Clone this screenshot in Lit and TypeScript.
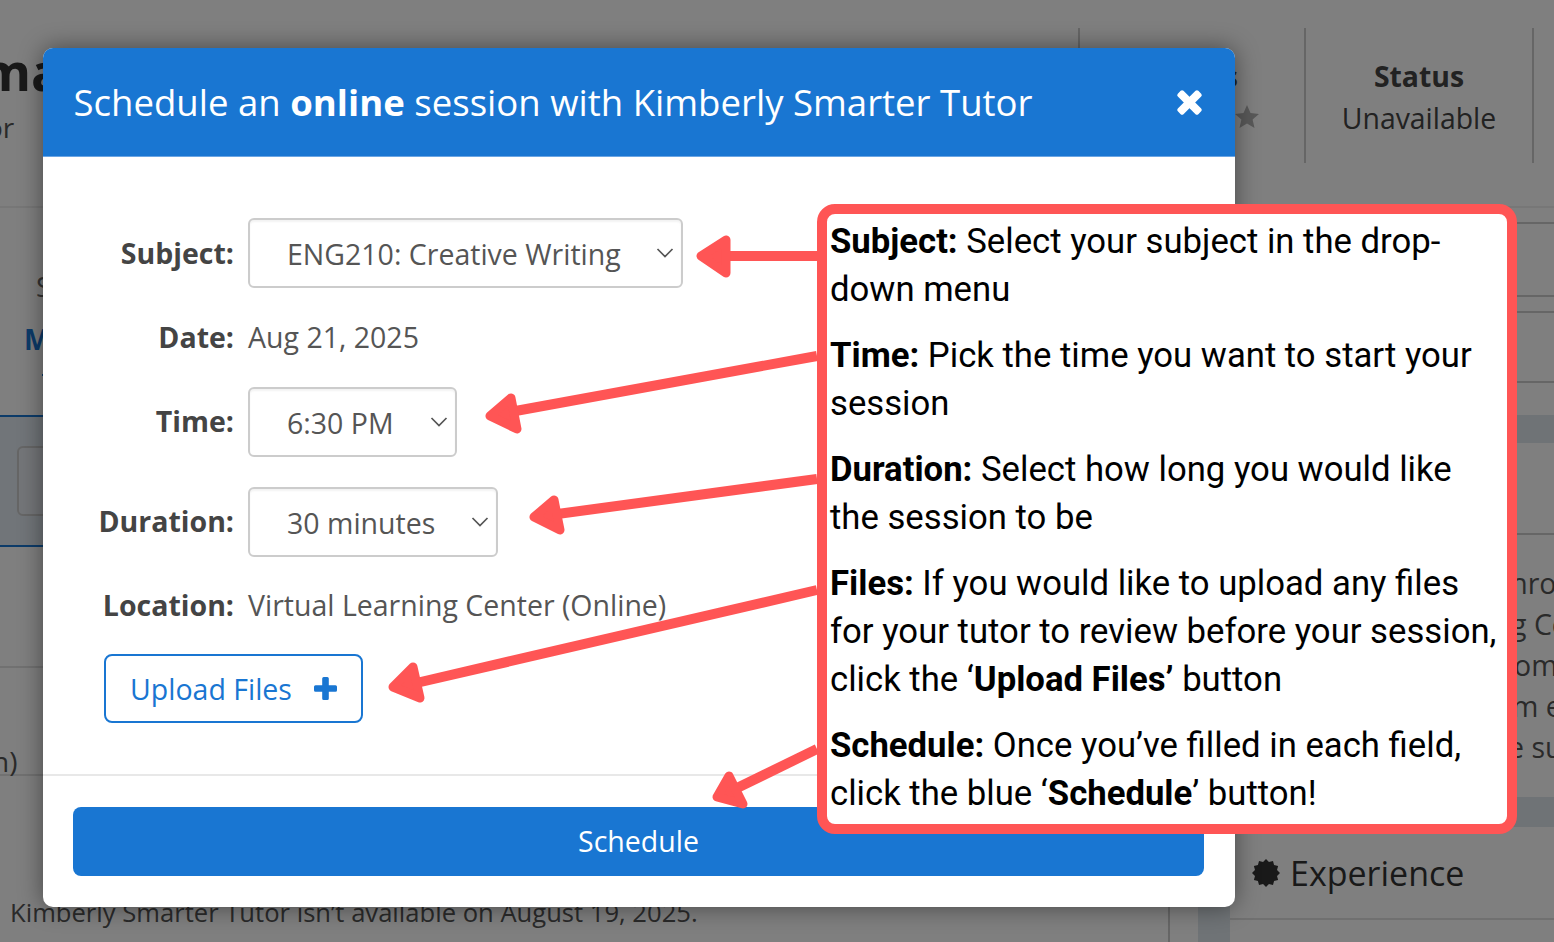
import { LitElement, html, css, svg } from "lit";
import { customElement } from "lit/decorators.js";

const starPts = "13,1 16.5,9 25,10 18.6,15.6 20.5,24 13,19.6 5.5,24 7.4,15.6 1,10 9.5,9";

const arrows = [
  { line: [817, 256, 720, 256], head: "701,256 726,240 726,273" },
  { line: [817, 356, 510, 412], head: "490,416 511,398 517,429" },
  { line: [817, 479, 550, 515], head: "534,517 554,500 560,530" },
  { line: [817, 590, 412, 684], head: "393,687 413,667 420,698" },
  { line: [817, 749, 735, 789], head: "717,797 729,776 743,804" },
];

const burst = Array.from({ length: 24 }, (_, i) => {
  const r = i % 2 ? 11.4 : 14;
  const a = (i * Math.PI) / 12;
  return `${(14 + r * Math.sin(a)).toFixed(2)},${(14 - r * Math.cos(a)).toFixed(2)}`;
}).join(" ");

@customElement("app-root")
export class AppRoot extends LitElement {
  static styles = css`
    :host {
      display: block;
      width: 1554px;
      height: 942px;
      position: relative;
      overflow: hidden;
      font-family: "Open Sans", "Liberation Sans", sans-serif;
      background: #fff;
      color: #444;
    }
    * { box-sizing: border-box; }

    /* page behind the dialog */
    .page { display: flex; flex-direction: column; height: 942px; overflow: hidden; }
    .top { display: flex; flex: none; height: 208px; border-bottom: 2px solid #eee; padding-top: 28px; }
    .intro { width: 1078px; flex: none; padding-top: 14px; }
    .intro h1 { margin: 0 0 0 -20px; font-size: 52px; line-height: 58px; font-weight: 700; color: #333; }
    .intro p { margin: 9px 0 0 -14px; font-size: 28px; line-height: 36px; color: #555; }
    .stat {
      flex: none; width: 226px; height: 135px; border-left: 2px solid #ccc;
      display: flex; flex-direction: column; align-items: center; padding-top: 28px;
      font-size: 28.4px; line-height: 41px; color: #444;
    }
    .stat.wide { width: 228px; }
    .stat b { font-weight: 700; }
    .stat b.rate { margin-right: 14px; }
    .stat span { margin-top: 1px; }
    .stars { display: flex; height: 41px; align-items: center; margin: -1px 0 0 5px; }
    .stars svg { width: 26px; height: 26px; fill: #b2b2b2; }
    .lower { flex: 1; display: flex; min-height: 0; }
    .main { flex: none; width: 1170px; border-right: 2px solid #ccc; }
    .tabs { height: 207px; padding-top: 60px; }
    .tabs .s { margin-left: 36px; font-size: 28px; line-height: 36px; color: #666; }
    .tabs .m { margin: 17px 0 0 24px; font-size: 28px; line-height: 36px; font-weight: 700; color: #1976d2; }
    .tabs .u { margin: 17px 0 0 42px; width: 60px; height: 2px; background: #1976d2; }
    .band { height: 132px; border-top: 2px solid #1976d2; border-bottom: 2px solid #1976d2; background: #e3eaf2; padding: 29px 0 0 17px; }
    .band div { width: 300px; height: 70px; border: 2px solid #ccc; border-radius: 6px; background: #e8edf3; }
    .row1 { height: 121px; border-bottom: 2px solid #e2e2e2; }
    .row2 { height: 108px; border-bottom: 2px solid #e2e2e2; padding-top: 79px; font-size: 28px; line-height: 28px; color: #555; margin-left: -8px; }
    .note { padding: 120px 0 0 10px; font-size: 25.6px; line-height: 34px; color: #555; white-space: nowrap; }
    .gap { flex: none; width: 28px; }
    .gutter { flex: none; width: 32px; background: #dfe6ed; }
    .side { flex: 1; display: flex; flex-direction: column; min-width: 0; overflow: hidden; }
    .rule { flex: none; border-bottom: 2px solid #ccc; }
    .r1 { height: 16px; }
    .r2 { height: 73px; }
    .r3 { height: 16px; }
    .r4 { height: 70px; }
    .r5 { height: 32px; border: 0; }
    .head { flex: none; height: 30px; background: #dfe6ed; }
    .head.first { height: 28px; }
    .r6 { height: 92px; }
    .lines { flex: none; height: 262px; padding-top: 28px; font-size: 28.5px; line-height: 41px; color: #555; white-space: nowrap; }
    .lines div:nth-child(1) { margin-left: 270px; }
    .lines div:nth-child(2) { margin-left: 281px; }
    .lines div:nth-child(3) { margin-left: 284px; }
    .lines div:nth-child(4) { margin-left: 282px; }
    .lines div:nth-child(5) { margin-left: 278px; }
    .exp { flex: none; height: 93px; border-bottom: 2px solid #e0e0e0; display: flex; align-items: center; gap: 10px; padding: 0 0 0 22px; font-size: 34px; color: #333; }
    .exp svg { width: 28px; height: 28px; fill: #333; flex: none; }

    .scrim { position: absolute; inset: 0; background: rgba(0, 0, 0, 0.5); }

    /* dialog */
    .modal {
      position: absolute; left: 43px; top: 48px; width: 1192px; height: 859px;
      background: #fff; border-radius: 10px; overflow: hidden;
      box-shadow: 0 0 24px rgba(0, 0, 0, 0.45);
      display: flex; flex-direction: column;
    }
    .mhead {
      flex: none; height: 109px; background: #1976d2; color: #fff;
      display: flex; align-items: center; justify-content: space-between;
      padding: 0 32px 0 30.5px; font-size: 36.55px; border-bottom: 1px solid #6aa5e4;
    }
    .mhead b { font-weight: 700; }
    .mhead svg { width: 27px; height: 27px; flex: none; margin-top: 1px; fill: #fff; }
    .form {
      flex: none; height: 619px; border-bottom: 2px solid #e8e8e8;
      padding: 61px 0 0 0; display: grid; grid-template-columns: 191px 1fr; column-gap: 14px;
      grid-template-rows: 70px 29px 40px 30px 70px 30px 70px 28px 40px 29px auto;
      font-size: 28.5px; color: #555;
    }
    .lab { grid-column: 1; text-align: right; font-weight: 700; color: #444; align-self: center; white-space: nowrap; }
    .lab.up { margin-bottom: 2px; }
    .val { grid-column: 2; align-self: center; white-space: nowrap; }
    .sp { grid-column: 1 / -1; }
    .sel {
      grid-column: 2; height: 70px; border: 2px solid #ccc; border-radius: 6px;
      display: flex; align-items: center; justify-content: space-between;
      padding: 2px 7px 0 37px; box-shadow: inset 0 2px 2px rgba(0, 0, 0, 0.05);
      white-space: nowrap;
    }
    .sel.a { width: 435px; }
    .sel.b { width: 209px; }
    .sel.c { width: 250px; }
    .sel svg { width: 18px; height: 12px; flex: none; margin-top: -2px; fill: none; stroke: #555; stroke-width: 1.7; }
    .upload {
      grid-column: 1 / -1; margin-left: 61px; width: 259px; height: 69px;
      border: 2px solid #1976d2; border-radius: 8px; color: #1976d2;
      display: flex; align-items: center; padding-left: 24px; gap: 22px;
    }
    .upload svg { width: 23px; height: 23px; flex: none; fill: #1976d2; }
    .mfoot { flex: 1; padding: 31px 31px 0 30px; }
    .go {
      height: 69px; background: #1976d2; border-radius: 8px; color: #fff; padding-bottom: 2px;
      display: flex; align-items: center; justify-content: center; font-size: 28.5px;
    }

    /* annotation */
    .callout {
      position: absolute; left: 817px; top: 204px; width: 700px; height: 630px;
      background: #fff; border: 10px solid #ff5555; border-radius: 18px;
      padding: 3px 0 0 3px; color: #000;
      font-family: Roboto, "Liberation Sans", sans-serif; font-size: 34.7px; line-height: 48px;
      white-space: nowrap;
    }
    .callout p { margin: 0 0 18px; }
    .callout b { font-weight: 700; }
    .marks { position: absolute; left: 0; top: 0; width: 1554px; height: 942px; pointer-events: none; }
    .marks line { stroke: #ff5555; stroke-width: 10; }
    .marks polygon { fill: #ff5555; stroke: #ff5555; stroke-width: 9; stroke-linejoin: round; }
  `;

  render() {
    return html`
      <div class="page">
        <div class="top">
          <div class="intro"><h1>ma</h1><p>or</p></div>
          <div class="stat">
            <b class="rate">Ratings</b>
            <div class="stars">
              ${[0, 1, 2, 3, 4].map(() => html`<svg viewBox="0 0 26 26"><polygon points=${starPts}></polygon></svg>`)}
            </div>
          </div>
          <div class="stat wide"><b>Status</b><span>Unavailable</span></div>
          <div class="stat"></div>
        </div>
        <div class="lower">
          <div class="main">
            <div class="tabs"><div class="s">S</div><div class="m">M</div><div class="u"></div></div>
            <div class="band"><div></div></div>
            <div class="row1"></div>
            <div class="row2">n)</div>
            <div class="note">Kimberly Smarter Tutor isn’t available on August 19, 2025.</div>
          </div>
          <div class="gap"></div>
          <div class="gutter"></div>
          <div class="side">
            <div class="rule r1"></div>
            <div class="rule r2"></div>
            <div class="rule r3"></div>
            <div class="rule r4"></div>
            <div class="rule r5"></div>
            <div class="head first"></div>
            <div class="rule r6"></div>
            <div class="lines">
              <div>through</div><div>g Center</div><div>om</div><div>m e</div><div>e su</div>
            </div>
            <div class="head"></div>
            <div class="exp">
              <svg viewBox="0 0 28 28"><polygon points=${burst}></polygon></svg>
              <span>Experience</span>
            </div>
          </div>
        </div>
      </div>
      <div class="scrim"></div>

      <div class="modal">
        <div class="mhead">
          <span>Schedule an <b>online</b> session with Kimberly Smarter Tutor</span>
          <svg viewBox="0 0 27 27">
            <rect x="9.5" y="-1" width="8" height="29" rx="2" transform="rotate(45 13.5 13.5)"></rect>
            <rect x="9.5" y="-1" width="8" height="29" rx="2" transform="rotate(-45 13.5 13.5)"></rect>
          </svg>
        </div>
        <div class="form">
          <div class="lab">Subject:</div>
          <div class="sel a"><span>ENG210: Creative Writing</span>${this.chev()}</div>
          <div class="sp"></div>
          <div class="lab">Date:</div><div class="val">Aug 21, 2025</div>
          <div class="sp"></div>
          <div class="lab up">Time:</div>
          <div class="sel b"><span>6:30 PM</span>${this.chev()}</div>
          <div class="sp"></div>
          <div class="lab up">Duration:</div>
          <div class="sel c"><span>30 minutes</span>${this.chev()}</div>
          <div class="sp"></div>
          <div class="lab">Location:</div><div class="val">Virtual Learning Center (Online)</div>
          <div class="sp"></div>
          <div class="upload">
            <span>Upload Files</span>
            <svg viewBox="0 0 23 23"><path d="M8.2 1.5 a1.5 1.5 0 0 1 1.5 -1.5 h3.6 a1.5 1.5 0 0 1 1.5 1.5 V8.2 h6.7 a1.5 1.5 0 0 1 1.5 1.5 v3.6 a1.5 1.5 0 0 1 -1.5 1.5 H14.8 v6.7 a1.5 1.5 0 0 1 -1.5 1.5 h-3.6 a1.5 1.5 0 0 1 -1.5 -1.5 V14.8 H1.5 a1.5 1.5 0 0 1 -1.5 -1.5 v-3.6 a1.5 1.5 0 0 1 1.5 -1.5 H8.2 z"></path></svg>
          </div>
        </div>
        <div class="mfoot"><div class="go">Schedule</div></div>
      </div>

      <div class="callout">
        <p><b>Subject:</b> Select your subject in the drop-<br />down menu</p>
        <p><b>Time:</b> Pick the time you want to start your<br />session</p>
        <p><b>Duration:</b> Select how long you would like<br />the session to be</p>
        <p><b>Files:</b> If you would like to upload any files<br />for your tutor to review before your session,<br />click the ‘<b>Upload Files’</b> button</p>
        <p><b>Schedule:</b> Once you’ve filled in each field,<br />click the blue ‘<b>Schedule</b>’ button!</p>
      </div>

      <svg class="marks" viewBox="0 0 1554 942">
        ${arrows.map(
          (a) => svg`<line x1=${a.line[0]} y1=${a.line[1]} x2=${a.line[2]} y2=${a.line[3]}></line><polygon points=${a.head}></polygon>`
        )}
      </svg>
    `;
  }

  chev() {
    return html`<svg viewBox="0 0 18 12"><path d="M1.5 2 L9 9.5 L16.5 2"></path></svg>`;
  }
}
